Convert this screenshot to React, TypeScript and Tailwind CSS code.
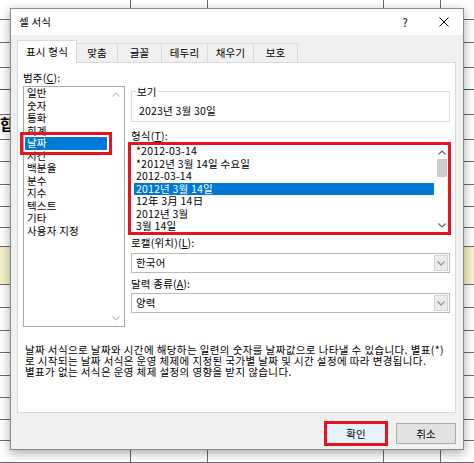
const font = "font-['Noto_Sans_CJK_KR','Noto_Sans_CJK_SC',sans-serif]";

const sheetRows = [
  { h: 'h-[20px]', cls: 'border-[#6b6b6b]' },
  { h: 'h-[23px]', cls: 'border-[#6b6b6b]' },
  { h: 'h-[25px]', cls: 'border-[#6b6b6b]' },
  { h: 'h-[22px]', cls: 'border-[#2f5f3f]' },
  { h: 'h-[25px]', cls: 'border-[#6b6b6b]' },
  { h: 'h-[25px]', cls: 'border-[#6b6b6b]', label: '합계' },
  { h: 'h-[22px]', cls: 'border-[#6b6b6b]' },
  { h: 'h-[23px]', cls: 'border-[#6b6b6b]' },
  { h: 'h-[22px]', cls: 'border-[#6b6b6b]' },
  { h: 'h-[21px]', cls: 'border-[#6b6b6b]' },
  { h: 'h-[19px]', cls: 'border-[#6b6b6b]' },
  { h: 'h-[38px]', cls: 'border-[#6b6b6b] bg-[#f6f2cc]' },
  { h: 'h-[23px]', cls: 'border-[#6b6b6b]' },
  { h: 'h-[23px]', cls: 'border-[#6b6b6b]' },
  { h: 'h-[22px]', cls: 'border-[#6b6b6b]' },
  { h: 'h-[23px]', cls: 'border-[#6b6b6b]' },
  { h: 'h-[22px]', cls: 'border-[#6b6b6b]' },
  { h: 'h-[22px]', cls: 'border-[#6b6b6b]' },
  { h: 'h-[21px]', cls: 'border-[#6b6b6b]' },
  { h: 'h-[22px]', cls: 'border-[#6b6b6b]' },
];

const colWidths = ['w-[131px]', 'w-[77px]', 'w-[176px]', 'w-[57px]'];

const tabs = [
  { label: '표시 형식', w: 'w-[60px]', active: true },
  { label: '맞춤', w: 'w-[41px]' },
  { label: '글꼴', w: 'w-[44px]' },
  { label: '테두리', w: 'w-[46px]' },
  { label: '채우기', w: 'w-[46px]' },
  { label: '보호', w: 'w-[44px]' },
];

const categories = ['일반', '숫자', '통화', '회계', '날짜', '시간', '백분율', '분수', '지수', '텍스트', '기타', '사용자 지정'];

const formats = [
  '*2012-03-14',
  '*2012년 3월 14일 수요일',
  '2012-03-14',
  '2012년 3월 14일',
  '12年 3月 14日',
  '2012년 3월',
  '3월 14일',
];

function ChevronUp({ className = '' }: { className?: string }) {
  return (
    <svg width="8" height="5" viewBox="0 0 8 5" fill="none" stroke="currentColor" strokeWidth="1.1" className={className}>
      <polyline points="0.5 4.5 4 1 7.5 4.5" />
    </svg>
  );
}

function ChevronDown({ className = '' }: { className?: string }) {
  return (
    <svg width="8" height="5" viewBox="0 0 8 5" fill="none" stroke="currentColor" strokeWidth="1.1" className={className}>
      <polyline points="0.5 0.5 4 4 7.5 0.5" />
    </svg>
  );
}

function Sheet() {
  return (
    <div className="flex flex-col">
      {sheetRows.map((row, i) => (
        <div key={i} className={`flex shrink-0 border-b ${row.h} ${row.cls}`}>
          {colWidths.map((w, j) => (
            <div key={j} className={`${w} shrink-0 overflow-hidden border-r border-[#6b6b6b]`}>
              {j === 0 && row.label && (
                <span className="block text-[15px] font-bold leading-[18px] text-black">{row.label}</span>
              )}
            </div>
          ))}
          <div className="flex-1" />
        </div>
      ))}
    </div>
  );
}

function Dropdown({ value }: { value: string }) {
  return (
    <div className="flex h-[20px] items-stretch border border-[#b9b9b9] bg-white">
      <div className="flex flex-1 items-center pl-[4px]">{value}</div>
      <div className="m-px flex w-[14px] items-center justify-center border border-[#d4d4d4] bg-[#ececec] text-[#8a8a8a]">
        <ChevronDown />
      </div>
    </div>
  );
}

export default function App() {
  return (
    <div className={`relative h-[463px] w-[474px] overflow-hidden bg-white text-[10.5px] tracking-[0.2px] text-black ${font}`}>
      <Sheet />

      <div className="absolute left-[10px] top-[8px] flex h-[442px] w-[454px] flex-col border border-[#8a8a8a] bg-[#f0f0f0] shadow-[0_3px_10px_rgba(0,0,0,0.35)]">
        {/* title bar */}
        <div className="flex h-[26px] items-center bg-white pl-[8px] pr-[14px]">
          <span>셀 서식</span>
          <span className="ml-auto mr-[31px] text-[11px]">?</span>
          <svg width="10" height="10" viewBox="0 0 10 10" stroke="#000" strokeWidth="1">
            <line x1="0.5" y1="0.5" x2="9.5" y2="9.5" />
            <line x1="9.5" y1="0.5" x2="0.5" y2="9.5" />
          </svg>
        </div>

        <div className="flex flex-1 flex-col pl-[6px] pr-[7px] pt-[5px]">
          {/* tabs */}
          <div className="relative z-10 -mb-px flex h-[23px] items-start">
            {tabs.map((t) =>
              t.active ? (
                <div key={t.label} className={`${t.w} flex h-[23px] items-center justify-center border border-b-0 border-[#d9d9d9] bg-white`}>
                  {t.label}
                </div>
              ) : (
                <div key={t.label} className={`${t.w} mt-[3px] flex h-[19px] items-center justify-center border-r border-t border-[#d9d9d9]`}>
                  {t.label}
                </div>
              )
            )}
          </div>

          {/* tab panel */}
          <div className="flex h-[351px] flex-col border border-[#d9d9d9] bg-white">
            <div className="flex">
              {/* category column */}
              <div className="pl-[5px] pt-[8px]">
                <div className="h-[13px] leading-[13px]">
                  범주(<u>C</u>):
                </div>
                <div className="mt-[2px] flex h-[241px] w-[102px] border border-[#a9a9a9]">
                  <div className="flex-1 pl-px">
                    {categories.map((c) =>
                      c === '날짜' ? (
                        <div key={c} className="relative h-[12.5px] bg-[#0078d7] pl-[2px] leading-[12.5px] text-white">
                          {c}
                          <div className="absolute -bottom-[5px] -left-[5px] -right-[5px] -top-[5px] z-10 border-[3px] border-[#e5141e]" />
                        </div>
                      ) : (
                        <div key={c} className="h-[12.5px] pl-[2px] leading-[12.5px]">
                          {c}
                        </div>
                      )
                    )}
                  </div>
                  <div className="flex w-[17px] flex-col items-center justify-between py-[5px] text-[#c4c4c4]">
                    <ChevronUp />
                    <ChevronDown />
                  </div>
                </div>
              </div>

              {/* right column */}
              <div className="ml-[6px] flex w-[319px] flex-col pt-[22px]">
                <fieldset className="border border-[#dcdcdc]">
                  <legend className="ml-[4px] px-px leading-[13px]">보기</legend>
                  <div className="pb-[4px] pl-[7px] pt-[6px] leading-[13px]">2023년 3월 30일</div>
                </fieldset>

                <div className="mt-[7px] h-[13px] leading-[13px]">
                  형식(<u>T</u>):
                </div>
                <div className="relative mr-[2px] mt-[3px] flex h-[87px] bg-white">
                  <div className="flex-1 pl-[3px] pr-px">
                    {formats.map((f, i) => (
                      <div
                        key={f}
                        className={
                          i === 3
                            ? 'h-[12.5px] bg-[#0078d7] pl-[2px] leading-[12.5px] text-white'
                            : 'h-[12.5px] pl-[2px] leading-[12.5px]'
                        }
                      >
                        {f}
                      </div>
                    ))}
                  </div>
                  <div className="flex w-[13px] flex-col items-center text-[#606060]">
                    <div className="flex h-[14px] items-center justify-center">
                      <ChevronUp />
                    </div>
                    <div className="h-[18px] w-[10px] bg-[#cdcdcd]" />
                    <div className="mt-auto flex h-[14px] items-center justify-center">
                      <ChevronDown />
                    </div>
                  </div>
                  <div className="absolute -bottom-[3px] -left-[3px] -right-[3px] -top-[3px] border-[3px] border-[#e5141e]" />
                </div>

                <div className="mt-[4px] h-[13px] leading-[13px]">
                  로캘(위치)(<u>L</u>):
                </div>
                <div className="mt-[4px]">
                  <Dropdown value="한국어" />
                </div>

                <div className="mt-[4px] h-[13px] leading-[13px]">
                  달력 종류(<u>A</u>):
                </div>
                <div className="mt-[3px]">
                  <Dropdown value="양력" />
                </div>
              </div>
            </div>

            <div className="mt-[17px] pl-[7px] leading-[11px] tracking-[0.4px]">
              <div className="whitespace-nowrap">
                날짜 서식으로 날짜와 시간에 해당하는 일련의 숫자를 날짜값으로 나타낼 수 있습니다. 별표(*)
              </div>
              <div className="whitespace-nowrap">
                로 시작되는 날짜 서식은 운영 체제에 지정된 국가별 날짜 및 시간 설정에 따라 변경됩니다.
              </div>
              <div className="whitespace-nowrap">별표가 없는 서식은 운영 체제 설정의 영향을 받지 않습니다.</div>
            </div>
          </div>

          {/* buttons */}
          <div className="flex justify-end gap-[10px] pt-[10px]">
            <div className="relative">
              <button className="h-[21px] w-[60px] border border-[#0078d7] bg-[#e5f1fb]">확인</button>
              <div className="absolute -bottom-[2px] -left-[2px] -right-[2px] -top-[2px] border-[3px] border-[#e5141e]" />
            </div>
            <button className="h-[21px] w-[60px] border border-[#adadad] bg-[#e1e1e1]">취소</button>
          </div>
        </div>
      </div>
    </div>
  );
}
